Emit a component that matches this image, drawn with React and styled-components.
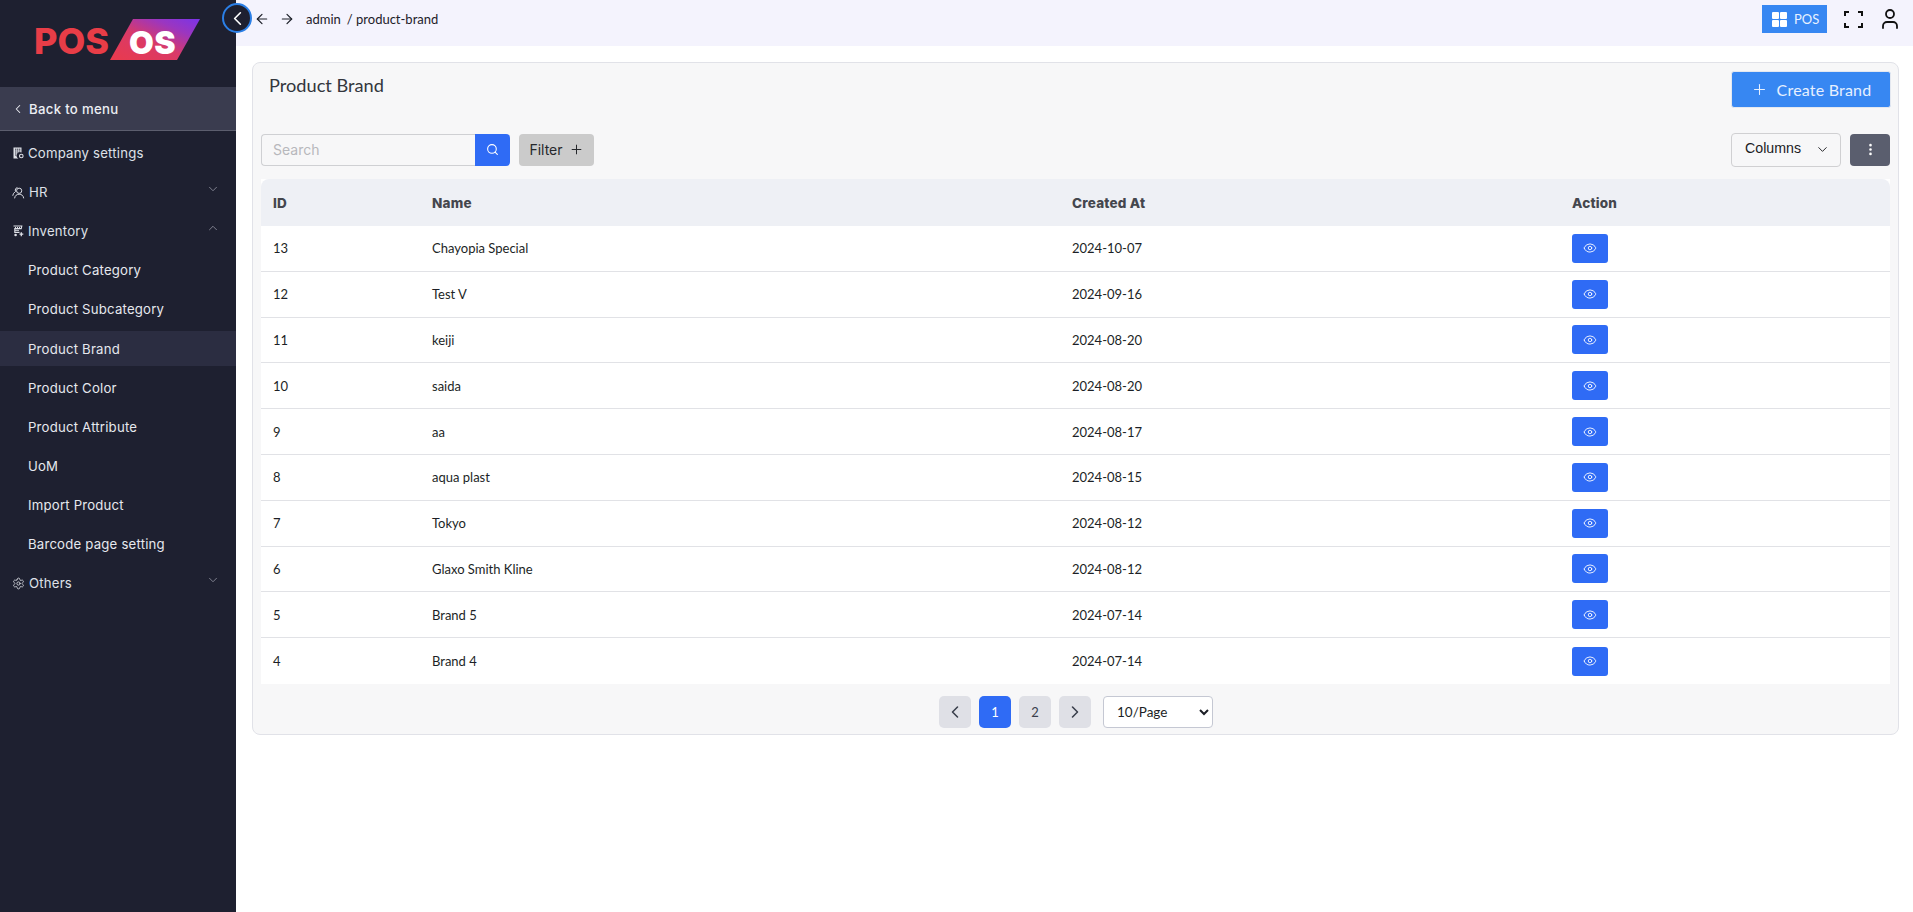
import React from "react";
import styled, { createGlobalStyle } from "styled-components";
import { ChevronLeft, ChevronRight, ChevronDown, ChevronUp, ArrowLeft, ArrowRight, Plus, Search, Eye, EllipsisVertical, User, Settings } from "lucide-react";

const Global = createGlobalStyle`
  * { box-sizing: border-box; }
  html, body { margin: 0; padding: 0; background: #fff; }
  body { font-family: "Lato", "Liberation Sans", sans-serif; color: #1f2430; }
  #root { width: 1913px; height: 912px; overflow: hidden; }
`;

const Page = styled.div`
  display: flex;
  width: 1913px;
  height: 912px;
`;
const Sidebar = styled.aside`
  width: 236px;
  flex: none;
  height: 100%;
  background: #1e2030;
  color: #eceef3;
  font-family: "Inter", "Liberation Sans", sans-serif;
`;
const LogoBox = styled.div`
  height: 87px;
  padding: 19px 0 0 33px;
`;
const LogoSvg = styled.svg`
  display: block;
`;
const BackRow = styled.div`
  height: 44px;
  display: flex;
  align-items: center;
  gap: 4px;
  padding-left: 11px;
  background: #3a3c4f;
  border-bottom: 1px solid #5c5e6e;
  font-size: 13.2px;
  font-weight: 500;
  letter-spacing: 0.3px;
`;
const Nav = styled.nav`
  padding-top: 4.5px;
  display: flex;
  flex-direction: column;
  gap: 4px;
`;
const NavRow = styled.div`
  height: 35.1px;
  display: flex;
  align-items: center;
  padding-left: ${(p) => (p.$sub ? "28px" : "12px")};
  padding-right: 16px;
  gap: 4px;
  font-size: 13.2px;
  font-weight: 400;
  letter-spacing: 0.2px;
  color: ${(p) => (p.$sub ? "#e6e8ee" : "#dfe1e8")};
  background: ${(p) => (p.$active ? "#2b2d41" : "transparent")};
`;
const NavLabel = styled.span`
  flex: 1;
`;
const IconSlot = styled.span`
  width: ${(p) => (p.$wide ? "13px" : "12px")};
  height: 14px;
  flex: none;
  display: flex;
  align-items: center;
  justify-content: center;
`;
const Chevron = styled.span`
  display: flex;
  color: #8b8d9a;
  margin-top: -6px;
`;

const Main = styled.main`
  flex: 1;
  min-width: 0;
  display: flex;
  flex-direction: column;
  position: relative;
`;
const TopBar = styled.header`
  height: 46px;
  flex: none;
  background: #f4f3fd;
  display: flex;
  align-items: center;
  padding: 0 11px 8px 18px;
  font-size: 13px;
  color: #1d2029;
`;
const CollapseButton = styled.button`
  position: absolute;
  left: -14px;
  top: 3px;
  width: 30px;
  height: 30px;
  padding: 0;
  border-radius: 50%;
  border: 2px solid #2b7fe6;
  background: #1e2030;
  color: #fff;
  display: flex;
  align-items: center;
  justify-content: center;
`;
const NavArrows = styled.div`
  display: flex;
  gap: 9px;
  margin-right: 11px;
`;
const Crumbs = styled.div`
  flex: 1;
  display: flex;
  gap: 6px;
`;
const PosButton = styled.div`
  width: 65px;
  height: 28px;
  background: #3787f2;
  color: #e9f2ff;
  display: flex;
  align-items: center;
  gap: 7px;
  padding-left: 10px;
  font-size: 13px;
`;
const GridGlyph = styled.div`
  display: grid;
  grid-template-columns: 7px 7px;
  grid-auto-rows: 7px;
  gap: 1px;
`;
const GridCell = styled.i`
  background: #fff;
  border-radius: 1px;
`;
const TopIcons = styled.div`
  display: flex;
  align-items: center;
  gap: 15px;
  margin-left: 17px;
  color: #111;
`;

const Content = styled.div`
  padding: 16px 14px 0 16px;
`;
const Card = styled.section`
  height: 673px;
  background: #f7f7f8;
  border: 1px solid #e1e2e8;
  border-radius: 8px;
  padding: 8px 8px 0 8px;
`;
const TitleRow = styled.div`
  display: flex;
  justify-content: space-between;
  height: 62px;
`;
const Title = styled.h1`
  margin: 2px 0 0 8px;
  font-size: 18.2px;
  font-weight: 400;
  line-height: 24px;
  color: #33363d;
`;
const CreateButton = styled.button`
  width: 160px;
  height: 37px;
  margin-right: -1px;
  border: 1px solid #e4e8f0;
  border-radius: 3px;
  background: #3787f2;
  color: #e6f0ff;
  font-family: inherit;
  font-size: 16px;
  letter-spacing: 0.2px;
  display: flex;
  align-items: center;
  justify-content: center;
  gap: 9px;
`;
const FilterRow = styled.div`
  display: flex;
  align-items: center;
  height: 33px;
`;
const SearchBox = styled.div`
  width: 214px;
  height: 32px;
  border: 1px solid #cfd0d3;
  border-right: 0;
  border-radius: 4px 0 0 4px;
  padding-left: 11px;
  display: flex;
  align-items: center;
  font-family: "Inter", sans-serif;
  font-size: 14px;
  color: #b7b8bc;
`;
const SearchButton = styled.div`
  width: 35px;
  height: 32px;
  background: #2f6bf5;
  border-radius: 0 4px 4px 0;
  color: #fff;
  display: flex;
  align-items: center;
  justify-content: center;
`;
const FilterButton = styled.div`
  margin-left: 9px;
  width: 75px;
  height: 32px;
  background: #cbcbcb;
  border-radius: 4px;
  display: flex;
  align-items: center;
  justify-content: center;
  gap: 6px;
  font-family: "Inter", sans-serif;
  font-size: 14px;
  color: #26282c;
`;
const Spacer = styled.div`
  flex: 1;
`;
const ColumnsButton = styled.div`
  width: 110px;
  height: 34px;
  border: 1px solid #d0d0d2;
  border-radius: 4px;
  padding: 0 11px 4px 13px;
  display: flex;
  align-items: center;
  justify-content: space-between;
  font-family: "Liberation Sans", sans-serif;
  font-size: 14.2px;
  color: #1b1b1f;
`;
const ColumnsChevron = styled(ChevronDown)`
  margin: 4px -1px 0 0;
`;
const MoreButton = styled.div`
  margin-left: 9px;
  width: 40px;
  height: 32px;
  border-radius: 4px;
  background: #5a5e6e;
  color: #fff;
  display: flex;
  align-items: center;
  justify-content: center;
`;
const Table = styled.table`
  margin-top: 13px;
  width: 1629px;
  border-collapse: separate;
  border-spacing: 0;
  table-layout: fixed;
  background: #fff;
  font-size: 13px;
  color: #1c1f26;
`;
const HeadCell = styled.th`
  height: 47px;
  background: #eef0f5;
  padding: 0 12px;
  text-align: left;
  font-family: "Inter", sans-serif;
  font-size: 13.5px;
  font-weight: 800;
  color: #44464d;
  letter-spacing: 0.2px;
  &:first-child { border-top-left-radius: 8px; }
  &:last-child { border-top-right-radius: 8px; }
`;
const Cell = styled.td`
  height: 45.8px;
  padding: 0 12px;
  border-bottom: 1px solid #e1e2e6;
  tr:last-child & { border-bottom: 0; }
`;
const EyeButton = styled.div`
  width: 36px;
  height: 29px;
  background: #2f6bf5;
  border-radius: 3px;
  color: #fff;
  display: flex;
  align-items: center;
  justify-content: center;
`;
const Pager = styled.div`
  display: flex;
  align-items: center;
  justify-content: center;
  gap: 8px;
  padding: 12px 0 0 0;
  margin-left: 1px;
`;
const PageButton = styled.div`
  width: 32px;
  height: 32px;
  border-radius: 5px;
  background: ${(p) => (p.$active ? "#2f6bf5" : "#dfe0e6")};
  color: ${(p) => (p.$active ? "#fff" : "#3a3f4c")};
  display: flex;
  align-items: center;
  justify-content: center;
  font-size: 13px;
`;
const PageSelect = styled.select`
  margin-left: 4px;
  width: 110px;
  height: 32px;
  border: 1px solid #c5c8d3;
  border-radius: 4px;
  background: #fff;
  padding-left: 9px;
  font-family: "Lato", sans-serif;
  font-size: 13.5px;
  color: #1c1f26;
`;

const CompanyIcon = () => (
  <svg width="11" height="12" viewBox="0 0 11 12" fill="none">
    <path d="M0.5 0.5H8.5V5.5A2.8 2.8 0 0 0 5.5 11.5H0.5Z" fill="#dfe1e8" />
    <path d="M2 2.2h1.4M4 2.2h1.4M6 2.2h1.4M2 4h1.4M4 4h1.4M6 4h1.4M2 6h1.4M4 6h1.4M2 8h1.4" stroke="#1e2030" strokeWidth="0.9" />
    <circle cx="8.3" cy="9" r="1.8" stroke="#dfe1e8" strokeWidth="1.1" />
  </svg>
);
const HrIcon = () => (
  <svg width="13" height="13" viewBox="0 0 12 12" fill="none" stroke="#dfe1e8" strokeWidth="0.9">
    <circle cx="6.6" cy="4.4" r="2.4" />
    <path d="M2.4 11.4c.3-2.6 2-3.8 4.2-3.8s3.9 1.2 4.2 3.8M5 1.4A2.6 2.6 0 0 0 3 3.7c0 .8.2 1.2.5 1.7M2.6 5.6C1.6 6.4 .9 7.5.7 9" />
  </svg>
);
const InventoryIcon = () => (
  <svg width="11" height="12" viewBox="0 0 11 12" fill="none">
    <path d="M0.5 1H8.8L8.2 3.6H1.8V7.4H6.5" stroke="#dfe1e8" strokeWidth="1.1" />
    <path d="M2 2.5h1M4 2.5h1M6 2.5h1M2 5.3h4" stroke="#dfe1e8" strokeWidth="1" />
    <circle cx="2.6" cy="10" r="1.3" fill="#dfe1e8" />
    <path d="M8.3 7.2v4M6.5 9.2h3.8" stroke="#dfe1e8" strokeWidth="1.3" />
  </svg>
);
const FullscreenIcon = () => (
  <svg width="19" height="17" viewBox="0 0 19 17" fill="none" stroke="#111" strokeWidth="2">
    <path d="M1 5V1H5M14 1H18V5M18 12V16H14M5 16H1V12" />
  </svg>
);

const items = [
  { icon: <CompanyIcon />, label: "Company settings" },
  { icon: <HrIcon />, label: "HR", chevron: "down", wide: true },
  { icon: <InventoryIcon />, label: "Inventory", chevron: "up" },
  { label: "Product Category" },
  { label: "Product Subcategory" },
  { label: "Product Brand", active: true },
  { label: "Product Color" },
  { label: "Product Attribute" },
  { label: "UoM" },
  { label: "Import Product" },
  { label: "Barcode page setting" },
  { icon: <Settings size={15} strokeWidth={1.5} />, label: "Others", chevron: "down", wide: true },
];

const rows = [
  [13, "Chayopia Special", "2024-10-07"],
  [12, "Test V", "2024-09-16"],
  [11, "keiji", "2024-08-20"],
  [10, "saida", "2024-08-20"],
  [9, "aa", "2024-08-17"],
  [8, "aqua plast", "2024-08-15"],
  [7, "Tokyo", "2024-08-12"],
  [6, "Glaxo Smith Kline", "2024-08-12"],
  [5, "Brand 5", "2024-07-14"],
  [4, "Brand 4", "2024-07-14"],
];

const Logo = () => (
  <LogoSvg width="170" height="44" viewBox="0 0 170 44">
    <defs>
      <linearGradient id="posGrad" x1="0" y1="1" x2="1" y2="0">
        <stop offset="0" stopColor="#ea3a4c" />
        <stop offset="0.45" stopColor="#d93a68" />
        <stop offset="0.75" stopColor="#9b36c0" />
        <stop offset="1" stopColor="#7a34e8" />
      </linearGradient>
    </defs>
    <polygon points="77,41 100,0 167,0 144,41" fill="url(#posGrad)" />
    <text x="1" y="35" fontFamily="Inter, sans-serif" fontWeight="800" fontSize="36" fill="#e83d47">POS</text>
    <text x="96" y="34.5" fontFamily="Inter, sans-serif" fontWeight="900" fontSize="32" letterSpacing="0.5" fill="#fff">OS</text>
  </LogoSvg>
);

export default function App() {
  return (
    <Page>
      <Global />
      <Sidebar>
        <LogoBox><Logo /></LogoBox>
        <BackRow><ChevronLeft size={14} strokeWidth={1.8} />Back to menu</BackRow>
        <Nav>
          {items.map((it) => (
            <NavRow key={it.label} $sub={!it.icon} $active={it.active}>
              {it.icon && <IconSlot $wide={it.wide}>{it.icon}</IconSlot>}
              <NavLabel>{it.label}</NavLabel>
              {it.chevron && (
                <Chevron>
                  {it.chevron === "down" ? <ChevronDown size={14} strokeWidth={1.5} /> : <ChevronUp size={14} strokeWidth={1.5} />}
                </Chevron>
              )}
            </NavRow>
          ))}
        </Nav>
      </Sidebar>
      <Main>
        <CollapseButton aria-label="Collapse"><ChevronLeft size={23} strokeWidth={1.7} /></CollapseButton>
        <TopBar>
          <NavArrows>
            <ArrowLeft size={16} strokeWidth={1.8} />
            <ArrowRight size={16} strokeWidth={1.8} />
          </NavArrows>
          <Crumbs><span>admin</span><span>/ product-brand</span></Crumbs>
          <PosButton>
            <GridGlyph><GridCell /><GridCell /><GridCell /><GridCell /></GridGlyph>
            POS
          </PosButton>
          <TopIcons>
            <FullscreenIcon />
            <User size={24} strokeWidth={1.8} />
          </TopIcons>
        </TopBar>
        <Content>
          <Card>
            <TitleRow>
              <Title>Product Brand</Title>
              <CreateButton><Plus size={17} strokeWidth={1.5} />Create Brand</CreateButton>
            </TitleRow>
            <FilterRow>
              <SearchBox>Search</SearchBox>
              <SearchButton><Search size={13} strokeWidth={2} /></SearchButton>
              <FilterButton>Filter<Plus size={15} strokeWidth={1.6} /></FilterButton>
              <Spacer />
              <ColumnsButton>Columns<ColumnsChevron size={15} strokeWidth={1.5} /></ColumnsButton>
              <MoreButton><EllipsisVertical size={15} strokeWidth={2.2} /></MoreButton>
            </FilterRow>
            <Table>
              <colgroup>
                <col style={{ width: 159 }} />
                <col style={{ width: 640 }} />
                <col style={{ width: 500 }} />
                <col style={{ width: 330 }} />
              </colgroup>
              <thead>
                <tr>
                  <HeadCell>ID</HeadCell>
                  <HeadCell>Name</HeadCell>
                  <HeadCell>Created At</HeadCell>
                  <HeadCell>Action</HeadCell>
                </tr>
              </thead>
              <tbody>
                {rows.map(([id, name, date]) => (
                  <tr key={id}>
                    <Cell>{id}</Cell>
                    <Cell>{name}</Cell>
                    <Cell>{date}</Cell>
                    <Cell><EyeButton><Eye size={14} strokeWidth={1.5} /></EyeButton></Cell>
                  </tr>
                ))}
              </tbody>
            </Table>
            <Pager>
              <PageButton><ChevronLeft size={20} strokeWidth={1.9} /></PageButton>
              <PageButton $active>1</PageButton>
              <PageButton>2</PageButton>
              <PageButton><ChevronRight size={20} strokeWidth={1.9} /></PageButton>
              <PageSelect defaultValue="10/Page"><option>10/Page</option></PageSelect>
            </Pager>
          </Card>
        </Content>
      </Main>
    </Page>
  );
}
